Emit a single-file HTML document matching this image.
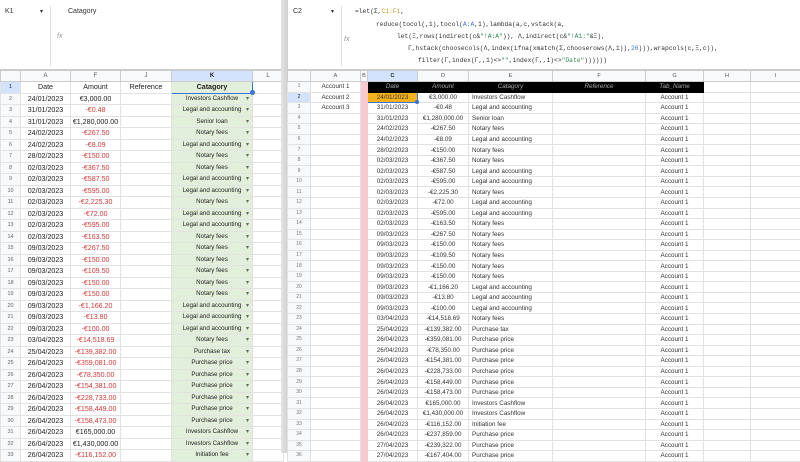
<!DOCTYPE html>
<html><head><meta charset="utf-8"><style>
*{margin:0;padding:0;box-sizing:border-box}
body{width:800px;height:453px;overflow:hidden;background:#fff;font-family:"Liberation Sans",Arial,sans-serif;position:relative}
.abs{position:absolute}
table{border-collapse:collapse;table-layout:fixed;position:absolute}
td{border:1px solid #e2e2e2;white-space:nowrap;overflow:hidden;padding:0}
#L{left:0;top:70px;font-size:7.1px;color:#222}
#L td{height:11.5px;line-height:10px;text-align:center}
#L tr.h td{height:11px;background:#f8f9fa;color:#555;font-size:6px;border-color:#ccc}
#L td.n{background:#f8f9fa;color:#666;font-size:5.5px}
#L td.k{background:#e2efda;position:relative;font-size:6.2px}
#L td.k:after{content:"▾";position:absolute;right:3px;top:0;color:#666;font-size:6px}
.r{color:#d03a3a}
#R{left:287px;top:70px;font-size:6.3px;color:#333}
#R td{height:10.55px;line-height:9px;text-align:center}
#R tr.h td{height:11px;background:#f8f9fa;color:#555;font-size:5.5px;border-color:#ccc}
#R td.n{background:#f8f9fa;color:#777;font-size:5px}
#R td.b{background:#f8c8d0;border-color:#f8c8d0}
#R td.e{text-align:left;padding-left:3px}
#R tr.blk td.x{background:#000;color:#aaa;font-style:italic;border-color:#000}
.mono{font-family:"Liberation Mono",monospace;font-size:6.3px;color:#333}
</style></head><body>
<div class="abs" style="left:0;top:0;width:287px;height:70px;background:#fff;border-bottom:1px solid #ccc"></div>
<div class="abs" style="left:5px;top:8px;font-size:7px;color:#333">K1</div>
<div class="abs" style="left:40px;top:8px;font-size:6px;color:#333">▾</div>
<div class="abs" style="left:50px;top:6px;width:1px;height:60px;background:#ddd"></div>
<div class="abs" style="left:68px;top:8px;font-size:7px;color:#333">Catagory</div>
<div class="abs" style="left:57px;top:33px;font-size:7px;color:#999;font-style:italic">fx</div>

<table id="L" style="width:283px">
<colgroup><col style="width:20px"><col style="width:50px"><col style="width:50px"><col style="width:51px"><col style="width:81px"><col style="width:31px"></colgroup>
<tr class="h"><td></td><td>A</td><td>F</td><td>J</td><td style="background:#d3e3fd;color:#222;font-weight:bold">K</td><td>L</td></tr>
<tr><td class="n" style="background:#d3e3fd;color:#222">1</td><td>Date</td><td>Amount</td><td>Reference</td><td style="background:#e2efda;font-weight:bold;border:1.5px solid #3b73d6">Catagory</td><td></td></tr>
<tr><td class="n">2</td><td>24/01/2023</td><td>€3,000.00</td><td></td><td class="k">Investors Cashflow</td><td></td></tr>
<tr><td class="n">3</td><td>31/01/2023</td><td class="r">-€0.48</td><td></td><td class="k">Legal and accounting</td><td></td></tr>
<tr><td class="n">4</td><td>31/01/2023</td><td>€1,280,000.00</td><td></td><td class="k">Senior loan</td><td></td></tr>
<tr><td class="n">5</td><td>24/02/2023</td><td class="r">-€267.50</td><td></td><td class="k">Notary fees</td><td></td></tr>
<tr><td class="n">6</td><td>24/02/2023</td><td class="r">-€8.09</td><td></td><td class="k">Legal and accounting</td><td></td></tr>
<tr><td class="n">7</td><td>28/02/2023</td><td class="r">-€150.00</td><td></td><td class="k">Notary fees</td><td></td></tr>
<tr><td class="n">8</td><td>02/03/2023</td><td class="r">-€367.50</td><td></td><td class="k">Notary fees</td><td></td></tr>
<tr><td class="n">9</td><td>02/03/2023</td><td class="r">-€587.50</td><td></td><td class="k">Legal and accounting</td><td></td></tr>
<tr><td class="n">10</td><td>02/03/2023</td><td class="r">-€595.00</td><td></td><td class="k">Legal and accounting</td><td></td></tr>
<tr><td class="n">11</td><td>02/03/2023</td><td class="r">-€2,225.30</td><td></td><td class="k">Notary fees</td><td></td></tr>
<tr><td class="n">12</td><td>02/03/2023</td><td class="r">-€72.00</td><td></td><td class="k">Legal and accounting</td><td></td></tr>
<tr><td class="n">13</td><td>02/03/2023</td><td class="r">-€595.00</td><td></td><td class="k">Legal and accounting</td><td></td></tr>
<tr><td class="n">14</td><td>02/03/2023</td><td class="r">-€163.50</td><td></td><td class="k">Notary fees</td><td></td></tr>
<tr><td class="n">15</td><td>09/03/2023</td><td class="r">-€267.50</td><td></td><td class="k">Notary fees</td><td></td></tr>
<tr><td class="n">16</td><td>09/03/2023</td><td class="r">-€150.00</td><td></td><td class="k">Notary fees</td><td></td></tr>
<tr><td class="n">17</td><td>09/03/2023</td><td class="r">-€109.50</td><td></td><td class="k">Notary fees</td><td></td></tr>
<tr><td class="n">18</td><td>09/03/2023</td><td class="r">-€150.00</td><td></td><td class="k">Notary fees</td><td></td></tr>
<tr><td class="n">19</td><td>09/03/2023</td><td class="r">-€150.00</td><td></td><td class="k">Notary fees</td><td></td></tr>
<tr><td class="n">20</td><td>09/03/2023</td><td class="r">-€1,166.20</td><td></td><td class="k">Legal and accounting</td><td></td></tr>
<tr><td class="n">21</td><td>09/03/2023</td><td class="r">-€13.80</td><td></td><td class="k">Legal and accounting</td><td></td></tr>
<tr><td class="n">22</td><td>09/03/2023</td><td class="r">-€100.00</td><td></td><td class="k">Legal and accounting</td><td></td></tr>
<tr><td class="n">23</td><td>03/04/2023</td><td class="r">-€14,518.69</td><td></td><td class="k">Notary fees</td><td></td></tr>
<tr><td class="n">24</td><td>25/04/2023</td><td class="r">-€139,382.00</td><td></td><td class="k">Purchase tax</td><td></td></tr>
<tr><td class="n">25</td><td>26/04/2023</td><td class="r">-€359,081.00</td><td></td><td class="k">Purchase price</td><td></td></tr>
<tr><td class="n">26</td><td>26/04/2023</td><td class="r">-€78,350.00</td><td></td><td class="k">Purchase price</td><td></td></tr>
<tr><td class="n">27</td><td>26/04/2023</td><td class="r">-€154,381.00</td><td></td><td class="k">Purchase price</td><td></td></tr>
<tr><td class="n">28</td><td>26/04/2023</td><td class="r">-€228,733.00</td><td></td><td class="k">Purchase price</td><td></td></tr>
<tr><td class="n">29</td><td>26/04/2023</td><td class="r">-€158,449.00</td><td></td><td class="k">Purchase price</td><td></td></tr>
<tr><td class="n">30</td><td>26/04/2023</td><td class="r">-€158,473.00</td><td></td><td class="k">Purchase price</td><td></td></tr>
<tr><td class="n">31</td><td>26/04/2023</td><td>€165,000.00</td><td></td><td class="k">Investors Cashflow</td><td></td></tr>
<tr><td class="n">32</td><td>26/04/2023</td><td>€1,430,000.00</td><td></td><td class="k">Investors Cashflow</td><td></td></tr>
<tr><td class="n">33</td><td>26/04/2023</td><td class="r">-€116,152.00</td><td></td><td class="k">Initiation fee</td><td></td></tr>
</table>
<div class="abs" style="left:250px;top:90px;width:5px;height:5px;border-radius:50%;background:#3b73d6"></div>
<div class="abs" style="left:281px;top:0;width:7px;height:453px;background:linear-gradient(90deg,#e4e4e4,#cfcfcf)"></div>

<div class="abs" style="left:288px;top:0;width:512px;height:70px;background:#fff;border-bottom:1px solid #ccc"></div>
<div class="abs" style="left:293px;top:8px;font-size:7px;color:#333">C2</div>
<div class="abs" style="left:331px;top:8px;font-size:6px;color:#333">▾</div>
<div class="abs" style="left:341px;top:6px;width:1px;height:60px;background:#ddd"></div>
<div class="abs" style="left:344px;top:36px;font-size:7px;color:#999;font-style:italic">fx</div>
<div class="abs mono" style="left:355px;top:8px">=let(Σ,<span style="color:#c89a2a">C1:F1</span>,</div>
<div class="abs mono" style="left:376px;top:21px">reduce(tocol(,1),tocol(<span style="color:#3b73d6">A:A</span>,1),lambda(a,c,vstack(a,</div>
<div class="abs mono" style="left:397px;top:33px">let(Ξ,rows(indirect(c&amp;<span style="color:#2e8b57">"!A:A"</span>)), Λ,indirect(c&amp;<span style="color:#2e8b57">"!A1:"</span>&amp;Ξ),</div>
<div class="abs mono" style="left:408px;top:45px">Γ,hstack(choosecols(Λ,index(ifna(xmatch(Σ,chooserows(Λ,1)),<span style="color:#3b73d6">26</span>))),wrapcols(c,Ξ,c)),</div>
<div class="abs mono" style="left:418px;top:57px">filter(Γ,index(Γ,,1)&lt;&gt;<span style="color:#2e8b57">""</span>,index(Γ,,1)&lt;&gt;<span style="color:#2e8b57">"Date"</span>))))))</div>

<table id="R" style="width:513px">
<colgroup><col style="width:23px"><col style="width:50px"><col style="width:7px"><col style="width:50px"><col style="width:51px"><col style="width:84px"><col style="width:93px"><col style="width:58px"><col style="width:47px"><col style="width:50px"></colgroup>
<tr class="h"><td></td><td>A</td><td>B</td><td style="background:#d3e3fd;color:#222;font-weight:bold">C</td><td>D</td><td>E</td><td>F</td><td>G</td><td>H</td><td>I</td></tr>
<tr class="blk"><td class="n">1</td><td>Account 1</td><td class="b"></td><td class="x">Date</td><td class="x">Amount</td><td class="x">Catagory</td><td class="x">Reference</td><td class="x">Tab_Name</td><td></td><td></td></tr>
<tr><td class="n" style="background:#d3e3fd;color:#222">2</td><td>Account 2</td><td class="b"></td><td style="background:#f6b21b;border:1.5px solid #3b73d6">24/01/2023</td><td>€3,000.00</td><td class="e">Investors Cashflow</td><td></td><td>Account 1</td><td></td><td></td></tr>
<tr><td class="n">3</td><td>Account 3</td><td class="b"></td><td>31/01/2023</td><td>-€0.48</td><td class="e">Legal and accounting</td><td></td><td>Account 1</td><td></td><td></td></tr>
<tr><td class="n">4</td><td></td><td class="b"></td><td>31/01/2023</td><td>€1,280,000.00</td><td class="e">Senior loan</td><td></td><td>Account 1</td><td></td><td></td></tr>
<tr><td class="n">5</td><td></td><td class="b"></td><td>24/02/2023</td><td>-€267.50</td><td class="e">Notary fees</td><td></td><td>Account 1</td><td></td><td></td></tr>
<tr><td class="n">6</td><td></td><td class="b"></td><td>24/02/2023</td><td>-€8.09</td><td class="e">Legal and accounting</td><td></td><td>Account 1</td><td></td><td></td></tr>
<tr><td class="n">7</td><td></td><td class="b"></td><td>28/02/2023</td><td>-€150.00</td><td class="e">Notary fees</td><td></td><td>Account 1</td><td></td><td></td></tr>
<tr><td class="n">8</td><td></td><td class="b"></td><td>02/03/2023</td><td>-€367.50</td><td class="e">Notary fees</td><td></td><td>Account 1</td><td></td><td></td></tr>
<tr><td class="n">9</td><td></td><td class="b"></td><td>02/03/2023</td><td>-€587.50</td><td class="e">Legal and accounting</td><td></td><td>Account 1</td><td></td><td></td></tr>
<tr><td class="n">10</td><td></td><td class="b"></td><td>02/03/2023</td><td>-€595.00</td><td class="e">Legal and accounting</td><td></td><td>Account 1</td><td></td><td></td></tr>
<tr><td class="n">11</td><td></td><td class="b"></td><td>02/03/2023</td><td>-€2,225.30</td><td class="e">Notary fees</td><td></td><td>Account 1</td><td></td><td></td></tr>
<tr><td class="n">12</td><td></td><td class="b"></td><td>02/03/2023</td><td>-€72.00</td><td class="e">Legal and accounting</td><td></td><td>Account 1</td><td></td><td></td></tr>
<tr><td class="n">13</td><td></td><td class="b"></td><td>02/03/2023</td><td>-€595.00</td><td class="e">Legal and accounting</td><td></td><td>Account 1</td><td></td><td></td></tr>
<tr><td class="n">14</td><td></td><td class="b"></td><td>02/03/2023</td><td>-€163.50</td><td class="e">Notary fees</td><td></td><td>Account 1</td><td></td><td></td></tr>
<tr><td class="n">15</td><td></td><td class="b"></td><td>09/03/2023</td><td>-€267.50</td><td class="e">Notary fees</td><td></td><td>Account 1</td><td></td><td></td></tr>
<tr><td class="n">16</td><td></td><td class="b"></td><td>09/03/2023</td><td>-€150.00</td><td class="e">Notary fees</td><td></td><td>Account 1</td><td></td><td></td></tr>
<tr><td class="n">17</td><td></td><td class="b"></td><td>09/03/2023</td><td>-€109.50</td><td class="e">Notary fees</td><td></td><td>Account 1</td><td></td><td></td></tr>
<tr><td class="n">18</td><td></td><td class="b"></td><td>09/03/2023</td><td>-€150.00</td><td class="e">Notary fees</td><td></td><td>Account 1</td><td></td><td></td></tr>
<tr><td class="n">19</td><td></td><td class="b"></td><td>09/03/2023</td><td>-€150.00</td><td class="e">Notary fees</td><td></td><td>Account 1</td><td></td><td></td></tr>
<tr><td class="n">20</td><td></td><td class="b"></td><td>09/03/2023</td><td>-€1,166.20</td><td class="e">Legal and accounting</td><td></td><td>Account 1</td><td></td><td></td></tr>
<tr><td class="n">21</td><td></td><td class="b"></td><td>09/03/2023</td><td>-€13.80</td><td class="e">Legal and accounting</td><td></td><td>Account 1</td><td></td><td></td></tr>
<tr><td class="n">22</td><td></td><td class="b"></td><td>09/03/2023</td><td>-€100.00</td><td class="e">Legal and accounting</td><td></td><td>Account 1</td><td></td><td></td></tr>
<tr><td class="n">23</td><td></td><td class="b"></td><td>03/04/2023</td><td>-€14,518.69</td><td class="e">Notary fees</td><td></td><td>Account 1</td><td></td><td></td></tr>
<tr><td class="n">24</td><td></td><td class="b"></td><td>25/04/2023</td><td>-€139,382.00</td><td class="e">Purchase tax</td><td></td><td>Account 1</td><td></td><td></td></tr>
<tr><td class="n">25</td><td></td><td class="b"></td><td>26/04/2023</td><td>-€359,081.00</td><td class="e">Purchase price</td><td></td><td>Account 1</td><td></td><td></td></tr>
<tr><td class="n">26</td><td></td><td class="b"></td><td>26/04/2023</td><td>-€78,350.00</td><td class="e">Purchase price</td><td></td><td>Account 1</td><td></td><td></td></tr>
<tr><td class="n">27</td><td></td><td class="b"></td><td>26/04/2023</td><td>-€154,381.00</td><td class="e">Purchase price</td><td></td><td>Account 1</td><td></td><td></td></tr>
<tr><td class="n">28</td><td></td><td class="b"></td><td>26/04/2023</td><td>-€228,733.00</td><td class="e">Purchase price</td><td></td><td>Account 1</td><td></td><td></td></tr>
<tr><td class="n">29</td><td></td><td class="b"></td><td>26/04/2023</td><td>-€158,449.00</td><td class="e">Purchase price</td><td></td><td>Account 1</td><td></td><td></td></tr>
<tr><td class="n">30</td><td></td><td class="b"></td><td>26/04/2023</td><td>-€158,473.00</td><td class="e">Purchase price</td><td></td><td>Account 1</td><td></td><td></td></tr>
<tr><td class="n">31</td><td></td><td class="b"></td><td>26/04/2023</td><td>€165,000.00</td><td class="e">Investors Cashflow</td><td></td><td>Account 1</td><td></td><td></td></tr>
<tr><td class="n">32</td><td></td><td class="b"></td><td>26/04/2023</td><td>€1,430,000.00</td><td class="e">Investors Cashflow</td><td></td><td>Account 1</td><td></td><td></td></tr>
<tr><td class="n">33</td><td></td><td class="b"></td><td>26/04/2023</td><td>-€116,152.00</td><td class="e">Initiation fee</td><td></td><td>Account 1</td><td></td><td></td></tr>
<tr><td class="n">34</td><td></td><td class="b"></td><td>26/04/2023</td><td>-€237,859.00</td><td class="e">Purchase price</td><td></td><td>Account 1</td><td></td><td></td></tr>
<tr><td class="n">35</td><td></td><td class="b"></td><td>27/04/2023</td><td>-€239,322.00</td><td class="e">Purchase price</td><td></td><td>Account 1</td><td></td><td></td></tr>
<tr><td class="n">36</td><td></td><td class="b"></td><td>27/04/2023</td><td>-€167,404.00</td><td class="e">Purchase price</td><td></td><td>Account 1</td><td></td><td></td></tr>
</table>
<div class="abs" style="left:415px;top:100px;width:4px;height:4px;border-radius:50%;background:#3b73d6"></div>
</body></html>
